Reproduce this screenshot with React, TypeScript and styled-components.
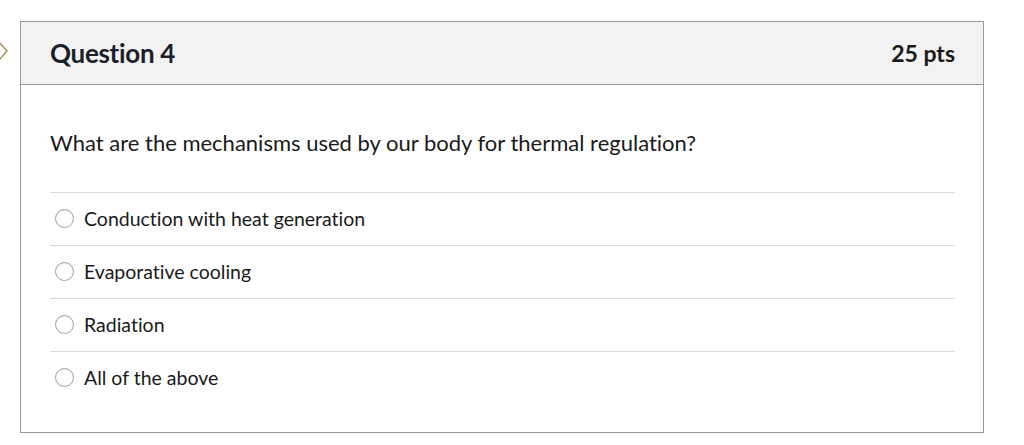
import * as React from 'react';
import styled, { createGlobalStyle } from 'styled-components';

const GlobalStyle = createGlobalStyle`
  html, body {
    margin: 0;
    padding: 0;
    background: #fff;
    font-family: Lato, "Open Sans", sans-serif;
    font-variant-ligatures: none;
    color: #2d3b45;
  }
`;

const Page = styled.div`
  display: flex;
  align-items: flex-start;
  width: 1024px;
  height: 445px;
  box-sizing: border-box;
  padding-top: 21px;
`;

const Marker = styled.div`
  width: 20px;
  padding-top: 18px;
  flex-shrink: 0;
  display: flex;
`;

const Card = styled.section`
  width: 964px;
  height: 412px;
  box-sizing: border-box;
  border: 1px solid #9a9a9a;
  display: flex;
  flex-direction: column;
`;

const Header = styled.header`
  display: flex;
  align-items: center;
  justify-content: space-between;
  height: 63px;
  box-sizing: border-box;
  padding: 0 28px 0 29px;
  background: #f2f2f2;
  border-bottom: 1px solid #9a9a9a;
`;

const Title = styled.h2`
  margin: 0;
  font-size: 26px;
  font-weight: 700;
  color: #1a1f2b;
  letter-spacing: -0.3px;
`;

const Points = styled.span`
  font-size: 23px;
  font-weight: 700;
  color: #1a1a1a;
`;

const Body = styled.div`
  padding: 0 28px 0 29px;
`;

const Prompt = styled.p`
  margin: 0;
  padding: 45px 0 36px;
  font-size: 22px;
  line-height: 26px;
  color: #1a1a1a;
`;

const Options = styled.div`
  display: flex;
  flex-direction: column;
`;

const Option = styled.label`
  display: flex;
  align-items: center;
  gap: 10px;
  height: 53px;
  box-sizing: border-box;
  border-top: 1px solid #d9d9d9;
  padding-left: 5px;
  padding-bottom: 2px;
  font-size: 19.5px;
  color: #1a1a1a;
  cursor: pointer;
`;

const Radio = styled.span`
  width: 19px;
  height: 19px;
  box-sizing: border-box;
  border-radius: 50%;
  border: 1px solid #a0a0a0;
  background: #fff;
  box-shadow: inset 0 1px 2px rgba(0, 0, 0, 0.08);
  flex-shrink: 0;
`;

const Chevron = () => (
  <svg width="10" height="24" viewBox="0 0 10 24">
    <path d="M-2 2 L7 12 L-2 22" fill="none" stroke="#b39b73" strokeWidth="1.8" />
  </svg>
);

const answers = [
  'Conduction with heat generation',
  'Evaporative cooling',
  'Radiation',
  'All of the above',
];

export default function App() {
  return (
    <>
      <GlobalStyle />
      <Page>
        <Marker>
          <Chevron />
        </Marker>
        <Card>
          <Header>
            <Title>Question 4</Title>
            <Points>25 pts</Points>
          </Header>
          <Body>
            <Prompt>What are the mechanisms used by our body for thermal regulation?</Prompt>
            <Options>
              {answers.map(a => (
                <Option key={a}>
                  <Radio />
                  {a}
                </Option>
              ))}
            </Options>
          </Body>
        </Card>
      </Page>
    </>
  );
}
